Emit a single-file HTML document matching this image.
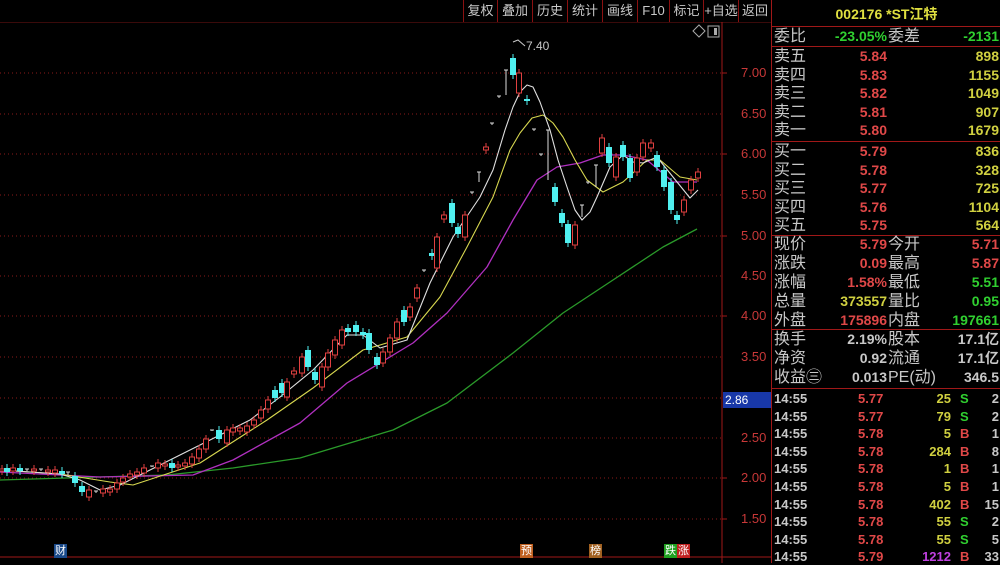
<!DOCTYPE html>
<html><head><meta charset="utf-8"><style>
*{margin:0;padding:0;box-sizing:border-box}
body{width:1000px;height:563px;background:#000;overflow:hidden;position:relative;font-family:"Liberation Sans","Noto Sans CJK SC",sans-serif;color:#c0c0c0}
.tb{position:absolute;top:0;height:22px;font-size:13px;color:#c8c8c8;text-align:center;line-height:22px;border-left:1px solid #8a1010}
.rp{position:absolute;left:771px;top:0;width:229px;height:563px;border-left:1px solid #a01818}
.row{position:absolute;left:2px;width:227px;height:19px;font-size:14px;line-height:19px;font-weight:bold}
.row span{position:absolute;top:0}
.row span.l{font-size:16px;font-weight:normal;color:#c8c8c8}
.r{color:#e04848}.g{color:#30d030}.y{color:#d0d040}.w{color:#c8c8c8}.p{color:#c040e0}
.hl{position:absolute;left:0;width:229px;height:1px;background:#a01818}
.tr{position:absolute;left:2px;width:227px;height:17px;font-size:13px;line-height:17px;font-weight:bold}
.tr span{position:absolute;top:0}
.ax{position:absolute;left:741px;font-size:13px;color:#c83838}
.mk{position:absolute;top:544px;width:13px;height:14px;font-size:11px;line-height:14px;text-align:center;color:#fff}
</style></head><body>
<div class="tb" style="left:463px;width:34px">复权</div>
<div class="tb" style="left:497px;width:35px">叠加</div>
<div class="tb" style="left:532px;width:35px">历史</div>
<div class="tb" style="left:567px;width:35px">统计</div>
<div class="tb" style="left:602px;width:35px">画线</div>
<div class="tb" style="left:637px;width:32px">F10</div>
<div class="tb" style="left:669px;width:34px">标记</div>
<div class="tb" style="left:703px;width:35px">+自选</div>
<div class="tb" style="left:738px;width:33px">返回</div>
<div style="position:absolute;left:0;top:22px;width:771px;height:1px;background:#3a0a0a"></div>
<svg style="position:absolute;left:0;top:0" width="771" height="563">
<g stroke="#8a1a1a" stroke-dasharray="1 3" stroke-width="1">
<line x1="0" y1="73" x2="722" y2="73"/><line x1="0" y1="114" x2="722" y2="114"/><line x1="0" y1="154" x2="722" y2="154"/><line x1="0" y1="195" x2="722" y2="195"/><line x1="0" y1="236" x2="722" y2="236"/><line x1="0" y1="276" x2="722" y2="276"/><line x1="0" y1="316" x2="722" y2="316"/><line x1="0" y1="357" x2="722" y2="357"/><line x1="0" y1="398" x2="722" y2="398"/><line x1="0" y1="438" x2="722" y2="438"/><line x1="0" y1="478" x2="722" y2="478"/><line x1="0" y1="519" x2="722" y2="519"/>
</g>
<line x1="722" y1="22" x2="722" y2="563" stroke="#a01818"/>
<line x1="0" y1="557" x2="771" y2="557" stroke="#a01818"/>
<g stroke="#a01818"><line x1="722" y1="73" x2="727" y2="73"/><line x1="722" y1="154" x2="727" y2="154"/><line x1="722" y1="236" x2="727" y2="236"/><line x1="722" y1="316" x2="727" y2="316"/><line x1="722" y1="478" x2="727" y2="478"/><line x1="722" y1="519" x2="727" y2="519"/></g>
<path d="M693 31 L699 25 L705 31 L699 37Z" fill="none" stroke="#aaa"/>
<rect x="708" y="26" width="11" height="11" fill="none" stroke="#aaa"/><rect x="714" y="28" width="3" height="7" fill="#aaa"/>
<polyline fill="none" stroke="#2a9a2a" stroke-width="1.3" stroke-linejoin="round" points="0,480 100,477 167,475 233,468 300,458 393,430 447,403 513,353 563,313 613,280 663,247 697,229"/>
<polyline fill="none" stroke="#b030c0" stroke-width="1.3" stroke-linejoin="round" points="0,472 100,477 193,475 233,460 300,423 347,383 413,343 447,313 487,267 513,220 537,180 557,167 580,163 603,155 623,155 647,160 673,182 697,182"/>
<polyline fill="none" stroke="#d8d850" stroke-width="1.1" stroke-linejoin="round" points="0,470 60,474 110,482 133,485 200,463 267,420 313,388 363,350 407,337 440,297 467,247 493,197 510,150 520,133 532,118 543,115 553,123 563,137 575,160 587,180 603,192 623,182 647,160 660,160 680,177 697,180"/>
<polyline fill="none" stroke="#e0e0e0" stroke-width="1.1" stroke-linejoin="round" points="0,470 60,474 80,480 100,490 120,485 150,470 200,445 250,420 280,397 313,370 347,335 363,335 380,348 407,340 430,283 453,237 480,197 493,170 505,130 513,107 520,92 527,85 533,87 540,102 550,130 558,160 567,187 575,210 582,220 590,212 597,197 610,167 623,155 633,162 643,163 657,157 673,177 690,198 698,190"/>
<g id="c"></g>
<text x="526" y="50" fill="#c8c8c8" font-size="12">7.40</text>
<path d="M513 42 L518 40 L525 46" fill="none" stroke="#c8c8c8"/>
</svg>
<div class="ax" style="top:65px">7.00</div><div class="ax" style="top:106px">6.50</div><div class="ax" style="top:146px">6.00</div><div class="ax" style="top:187px">5.50</div><div class="ax" style="top:228px">5.00</div><div class="ax" style="top:268px">4.50</div><div class="ax" style="top:308px">4.00</div><div class="ax" style="top:349px">3.50</div><div class="ax" style="top:430px">2.50</div><div class="ax" style="top:470px">2.00</div><div class="ax" style="top:511px">1.50</div>
<div style="position:absolute;left:723px;top:392px;width:48px;height:16px;background:#1838a8;color:#fff;font-size:12px;line-height:16px;padding-left:2px">2.86</div>
<div class="mk" style="left:54px;background:#1a4a8a">财</div>
<div class="mk" style="left:520px;background:#c06020">预</div>
<div class="mk" style="left:589px;background:#a06020">榜</div>
<div class="mk" style="left:664px;background:#20a020">跌</div>
<div class="mk" style="left:677px;background:#c02020">涨</div>
<div class="rp">
<div style="position:absolute;top:4px;left:0;width:229px;text-align:center;font-size:14px;font-weight:bold;color:#e0e040">002176 *ST江特</div>
<div class="hl" style="top:26px"></div>
<div class="row" style="top:27px"><span class="l">委比</span><span class="g" style="right:114px">-23.05%</span><span class="l" style="left:114px">委差</span><span class="g" style="right:2px">-2131</span></div>
<div class="hl" style="top:46px"></div>
<div class="row" style="top:47px"><span class="l">卖五</span><span class="r" style="right:114px">5.84</span><span class="y" style="right:2px">898</span></div>
<div class="row" style="top:65.5px"><span class="l">卖四</span><span class="r" style="right:114px">5.83</span><span class="y" style="right:2px">1155</span></div>
<div class="row" style="top:84px"><span class="l">卖三</span><span class="r" style="right:114px">5.82</span><span class="y" style="right:2px">1049</span></div>
<div class="row" style="top:102.5px"><span class="l">卖二</span><span class="r" style="right:114px">5.81</span><span class="y" style="right:2px">907</span></div>
<div class="row" style="top:121px"><span class="l">卖一</span><span class="r" style="right:114px">5.80</span><span class="y" style="right:2px">1679</span></div>
<div class="hl" style="top:141px"></div>
<div class="row" style="top:142px"><span class="l">买一</span><span class="r" style="right:114px">5.79</span><span class="y" style="right:2px">836</span></div>
<div class="row" style="top:160.5px"><span class="l">买二</span><span class="r" style="right:114px">5.78</span><span class="y" style="right:2px">328</span></div>
<div class="row" style="top:179px"><span class="l">买三</span><span class="r" style="right:114px">5.77</span><span class="y" style="right:2px">725</span></div>
<div class="row" style="top:197.5px"><span class="l">买四</span><span class="r" style="right:114px">5.76</span><span class="y" style="right:2px">1104</span></div>
<div class="row" style="top:216px"><span class="l">买五</span><span class="r" style="right:114px">5.75</span><span class="y" style="right:2px">564</span></div>
<div class="hl" style="top:235px"></div>
<div class="row" style="top:235px"><span class="l">现价</span><span class="r" style="right:114px">5.79</span><span class="l" style="left:114px">今开</span><span class="r" style="right:2px">5.71</span></div>
<div class="row" style="top:254px"><span class="l">涨跌</span><span class="r" style="right:114px">0.09</span><span class="l" style="left:114px">最高</span><span class="r" style="right:2px">5.87</span></div>
<div class="row" style="top:273px"><span class="l">涨幅</span><span class="r" style="right:114px">1.58%</span><span class="l" style="left:114px">最低</span><span class="g" style="right:2px">5.51</span></div>
<div class="row" style="top:292px"><span class="l">总量</span><span class="y" style="right:114px">373557</span><span class="l" style="left:114px">量比</span><span class="g" style="right:2px">0.95</span></div>
<div class="row" style="top:311px"><span class="l">外盘</span><span class="r" style="right:114px">175896</span><span class="l" style="left:114px">内盘</span><span class="g" style="right:2px">197661</span></div>
<div class="hl" style="top:329px"></div>
<div class="row" style="top:330px"><span class="l">换手</span><span class="w" style="right:114px">2.19%</span><span class="l" style="left:114px">股本</span><span class="w" style="right:2px">17.1亿</span></div>
<div class="row" style="top:349px"><span class="l">净资</span><span class="w" style="right:114px">0.92</span><span class="l" style="left:114px">流通</span><span class="w" style="right:2px">17.1亿</span></div>
<div class="row" style="top:368px"><span class="l">收益㊂</span><span class="w" style="right:114px">0.013</span><span class="l" style="left:114px">PE(动)</span><span class="w" style="right:2px">346.5</span></div>
<div class="hl" style="top:388px"></div>
<div class="tr" style="top:390px"><span class="w">14:55</span><span class="r" style="left:84px">5.77</span><span class="y" style="right:50px">25</span><span class="g" style="left:186px">S</span><span class="w" style="right:2px">2</span></div>
<div class="tr" style="top:407.6px"><span class="w">14:55</span><span class="r" style="left:84px">5.77</span><span class="y" style="right:50px">79</span><span class="g" style="left:186px">S</span><span class="w" style="right:2px">2</span></div>
<div class="tr" style="top:425.2px"><span class="w">14:55</span><span class="r" style="left:84px">5.78</span><span class="y" style="right:50px">5</span><span class="r" style="left:186px">B</span><span class="w" style="right:2px">1</span></div>
<div class="tr" style="top:442.8px"><span class="w">14:55</span><span class="r" style="left:84px">5.78</span><span class="y" style="right:50px">284</span><span class="r" style="left:186px">B</span><span class="w" style="right:2px">8</span></div>
<div class="tr" style="top:460.4px"><span class="w">14:55</span><span class="r" style="left:84px">5.78</span><span class="y" style="right:50px">1</span><span class="r" style="left:186px">B</span><span class="w" style="right:2px">1</span></div>
<div class="tr" style="top:478px"><span class="w">14:55</span><span class="r" style="left:84px">5.78</span><span class="y" style="right:50px">5</span><span class="r" style="left:186px">B</span><span class="w" style="right:2px">1</span></div>
<div class="tr" style="top:495.6px"><span class="w">14:55</span><span class="r" style="left:84px">5.78</span><span class="y" style="right:50px">402</span><span class="r" style="left:186px">B</span><span class="w" style="right:2px">15</span></div>
<div class="tr" style="top:513.2px"><span class="w">14:55</span><span class="r" style="left:84px">5.78</span><span class="y" style="right:50px">55</span><span class="g" style="left:186px">S</span><span class="w" style="right:2px">2</span></div>
<div class="tr" style="top:530.8px"><span class="w">14:55</span><span class="r" style="left:84px">5.78</span><span class="y" style="right:50px">55</span><span class="g" style="left:186px">S</span><span class="w" style="right:2px">5</span></div>
<div class="tr" style="top:548.4px"><span class="w">14:55</span><span class="r" style="left:84px">5.79</span><span class="p" style="right:50px">1212</span><span class="r" style="left:186px">B</span><span class="w" style="right:2px">33</span></div>
</div>
<script>
var C=[
[2,469,471,'r'],[7,468,472,'c'],[13,468,471,'r'],[20,468,471,'c'],[27,469,471,'w'],[34,469,471,'r'],[41,469,471,'w'],[48,470,472,'r'],[55,470,473,'r'],[62,471,474,'c'],[68,472,475,'w'],[75,476,483,'c'],[82,486,492,'c'],[89,490,497,'r'],[96,491,493,'w'],[103,489,493,'r'],[110,489,492,'r'],[117,483,489,'r'],[123,478,482,'r'],[130,474,477,'r'],[137,472,475,'r'],[144,468,473,'r'],[152,466,467,'w'],[158,463,468,'r'],[165,464,466,'r'],[172,463,468,'c'],[178,465,467,'r'],[185,463,466,'r'],[192,457,464,'r'],[199,449,458,'r'],[206,439,449,'r'],[212,430,431,'w'],[219,430,439,'c'],[227,430,443,'r'],[233,428,432,'r'],[240,428,431,'r'],[247,426,432,'r'],[254,420,425,'r'],[261,410,418,'r'],[268,400,409,'r'],[275,390,398,'c'],
[282,383,393,'c'],[287,382,397,'r'],[294,371,374,'r'],[302,357,373,'r'],[308,350,367,'c'],[315,372,380,'c'],[322,367,387,'r'],[328,353,367,'r'],[335,340,355,'r'],[342,330,345,'r'],[348,328,332,'c'],[356,325,332,'c'],[363,332,335,'c'],[369,333,350,'c'],[377,357,365,'c'],[383,352,363,'r'],[390,338,352,'r'],[397,322,338,'r'],[404,310,322,'c'],[410,307,317,'r'],[417,288,298,'r'],[424,270,272,'w'],[432,253,256,'c'],[437,237,268,'r'],[444,215,219,'r'],[452,203,223,'c'],[458,227,234,'c'],[465,215,237,'r'],[472,192,194,'w'],[479,172,182,'w'],[486,147,150,'r'],[492,123,125,'w'],[499,96,98,'w'],[506,70,95,'w'],[513,58,75,'c'],[519,73,93,'r'],[527,99,101,'c'],[534,129,131,'w'],[541,154,156,'w'],[548,130,180,'w'],[555,187,202,'c'],[562,213,223,'c'],[568,224,243,'c'],[575,225,245,'r'],[582,205,217,'w'],[588,182,184,'w'],[596,165,187,'w'],[602,138,153,'r'],[609,147,163,'c'],[616,157,177,'r'],[623,145,157,'c'],[630,158,178,'c'],[637,158,172,'r'],[643,143,157,'r'],[651,143,148,'r'],[657,155,167,'c'],[664,170,187,'c'],[671,182,210,'c'],[677,215,220,'c'],[684,200,212,'r'],[691,180,190,'r'],[698,172,178,'r']];
var s='';C.forEach(function(k){var x=k[0],a=k[1],b=k[2],t=k[3];var hi=a-4,lo=b+4;
if(t=='r'){s+='<line x1="'+x+'" y1="'+hi+'" x2="'+x+'" y2="'+lo+'" stroke="#e04040"/><rect x="'+(x-2.5)+'" y="'+a+'" width="5" height="'+Math.max(1,b-a)+'" fill="#000" stroke="#e04040"/>';}
else if(t=='c'){s+='<line x1="'+x+'" y1="'+hi+'" x2="'+x+'" y2="'+lo+'" stroke="#50f0f0"/><rect x="'+(x-3)+'" y="'+a+'" width="6" height="'+Math.max(1,b-a)+'" fill="#50f0f0"/>';}
else{s+='<line x1="'+x+'" y1="'+a+'" x2="'+x+'" y2="'+b+'" stroke="#ddd"/><line x1="'+(x-2)+'" y1="'+a+'" x2="'+(x+2)+'" y2="'+a+'" stroke="#ddd"/>';}});
document.getElementById('c').innerHTML=s;
</script>
</body></html>
